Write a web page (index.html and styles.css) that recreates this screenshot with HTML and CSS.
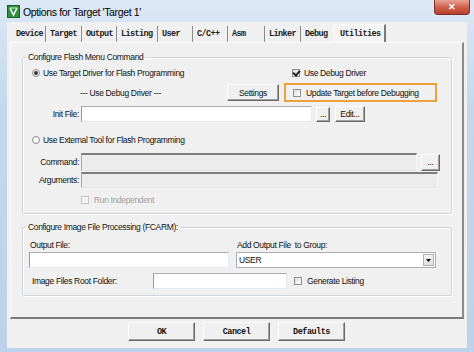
FILE: index.html
```html
<!DOCTYPE html>
<html lang="en">
<head>
  <meta charset="UTF-8" />
  <title>Options for Target 'Target 1'</title>
  <link rel="stylesheet" href="styles.css">
</head>
<body>

<div class="window">
  <div class="titlebar">
    <svg class="app-icon" width="13" height="13" viewBox="0 0 13 13">
      <rect x="0.5" y="0.5" width="12" height="12" fill="#2f8f3a" stroke="#1d5e25" />
      <path d="M3 3 L6.5 10 L10 3" stroke="#fff" stroke-width="1.6" fill="none" />
      <path d="M3 3 H10" stroke="#bfe8c0" stroke-width="1.2" />
    </svg>
    <span class="title">Options for Target 'Target 1'</span>
    <div class="close">&#x2715;</div>
  </div>

  <div class="client">
    <ul class="tabs">
      <li>Device</li>
      <li>Target</li>
      <li>Output</li>
      <li>Listing</li>
      <li>User</li>
      <li>C/C++</li>
      <li>Asm</li>
      <li>Linker</li>
      <li>Debug</li>
      <li class="active">Utilities</li>
    </ul>

    <div class="page">
      <fieldset class="group flash">
        <legend>Configure Flash Menu Command</legend>

        <div class="row driver-row">
          <div class="col-a">
            <span class="radio on"></span>
            <span>Use Target Driver for Flash Programming</span>
          </div>
          <div class="col-b pad-b">
            <span class="check on"></span>
            <span>Use Debug Driver</span>
          </div>
        </div>

        <div class="row settings-row">
          <div class="col-a">
            <span class="debug-note">--- Use Debug Driver ---</span>
            <button class="btn settings">Settings</button>
          </div>
          <div class="col-b highlight">
            <span class="check"></span>
            <span>Update Target before Debugging</span>
          </div>
        </div>

        <div class="row field init-row">
          <span class="field-label">Init File:</span>
          <span class="text init-input"></span>
          <button class="btn dots">...</button>
          <button class="btn edit">Edit...</button>
        </div>

        <div class="row option-row">
          <span class="radio"></span>
          <span>Use External Tool for Flash Programming</span>
        </div>

        <div class="row field command-row">
          <span class="field-label">Command:</span>
          <span class="text sunken command-input"></span>
          <button class="btn dots wide">...</button>
        </div>

        <div class="row field args-row">
          <span class="field-label">Arguments:</span>
          <span class="text sunken args-input"></span>
        </div>

        <div class="row run-row disabled">
          <span class="check faded"></span>
          <span>Run Independent</span>
        </div>
      </fieldset>

      <fieldset class="group image">
        <legend>Configure Image File Processing (FCARM):</legend>

        <div class="image-grid">
          <span class="grid-label">Output File:</span>
          <span class="grid-label">Add Output File&nbsp; to Group:</span>
          <span class="text"></span>
          <div class="combo">
            <span class="combo-value">USER</span>
            <span class="combo-arrow">
              <svg width="5" height="3" viewBox="0 0 5 3"><path d="M0 0 H5 L2.5 3 Z" fill="#000" /></svg>
            </span>
          </div>
        </div>

        <div class="row root-row">
          <span class="root-label">Image Files Root Folder:</span>
          <span class="text root-input"></span>
          <span class="check"></span>
          <span>Generate Listing</span>
        </div>
      </fieldset>
    </div>

    <div class="actions">
      <button class="btn big">OK</button>
      <button class="btn big">Cancel</button>
      <button class="btn big">Defaults</button>
    </div>
  </div>
</div>

</body>
</html>
```

FILE: styles.css
```css
:root {
  --frame: #c5d9ee;
  --face: #f0f0f0;
  --group-line: #d0d5da;
}

body {
  margin: 0;
  padding: 0;
  background: var(--frame);
}

.window {
  width: 474px;
  height: 352px;
  overflow: hidden;
  background: linear-gradient(#dce8f5, #c4d8ed 30%, #bcd2ea);
  font-family: "Liberation Sans", sans-serif;
  font-size: 8.5px;
  letter-spacing: -0.35px;
  color: #111;
}

/* title bar */

.titlebar {
  height: 22px;
  display: flex;
  align-items: center;
  padding-left: 7px;
}

.app-icon {
  margin-top: 1px;
}

.title {
  margin-left: 3px;
  margin-top: 1px;
  font-size: 10.5px;
  letter-spacing: -0.35px;
  color: #000;
}

.close {
  margin-left: auto;
  margin-right: 4px;
  align-self: flex-start;
  width: 36px;
  height: 15px;
  border: 1px solid #7b2f2a;
  border-top: none;
  border-radius: 0 0 4px 4px;
  background: linear-gradient(#e8a493, #d0624e 50%, #b8402e);
  color: #fff;
  font-size: 9px;
  font-weight: bold;
  letter-spacing: 0;
  text-align: center;
  line-height: 14px;
  box-sizing: border-box;
}

/* client area */

.client {
  margin: 0 7px;
  height: 326px;
  background: var(--face);
  display: flex;
  flex-direction: column;
}

.tabs {
  list-style: none;
  margin: 0;
  padding: 4px 0 0 5px;
  display: flex;
  height: 16px;
  font-family: "Liberation Mono", monospace;
  font-size: 8.5px;
  font-weight: bold;
  letter-spacing: -0.6px;
}

.tabs li {
  box-sizing: border-box;
  height: 16px;
  line-height: 16px;
  padding-left: 4px;
  border-right: 1px solid #8a8a8a;
  color: #222;
}

.tabs li:nth-child(1) { width: 34px; }
.tabs li:nth-child(2) { width: 36px; }
.tabs li:nth-child(3) { width: 35px; }
.tabs li:nth-child(4) { width: 41px; }
.tabs li:nth-child(5) { width: 35px; }
.tabs li:nth-child(6) { width: 35px; }
.tabs li:nth-child(7) { width: 37px; }
.tabs li:nth-child(8) { width: 36px; }
.tabs li:nth-child(9) { width: 32px; border-right: none; }

.tabs li.active {
  width: 53px;
  height: 18px;
  margin-top: -2px;
  line-height: 18px;
  padding-left: 6px;
  background: #f4f4f4;
  border-left: 1px solid #fff;
  border-top: 1px solid #fff;
  border-right: 2px solid #7a7a7a;
}

.page {
  margin: 0 3px;
  height: 277px;
  border-top: 1px solid #fff;
  border-left: 1px solid #fff;
  border-right: 2px solid #8a8a8a;
  border-bottom: 2px solid #7a7a7a;
  padding: 9px 10px 0 11px;
  box-sizing: border-box;
}

/* group boxes */

.group {
  margin: 0;
  padding: 0;
  border: 1px solid var(--group-line);
  border-radius: 2px;
  box-shadow: inset 1px 1px #fff, 1px 1px #fff;
  min-width: 0;
}

.group legend {
  margin-left: 3px;
  padding: 0 2px;
  line-height: 11px;
}

.flash {
  height: 162px;
  box-sizing: border-box;
}

.image {
  margin-top: 8px;
  height: 74px;
  box-sizing: border-box;
}

.row {
  display: flex;
  align-items: center;
}

.driver-row {
  height: 12px;
  margin-top: 4px;
}

.col-a {
  width: 261px;
  display: flex;
  align-items: center;
}

.col-b {
  display: flex;
  align-items: center;
  gap: 4px;
}

.driver-row .col-a {
  padding-left: 9px;
  box-sizing: border-box;
  gap: 3px;
}

.pad-b {
  padding-left: 8px;
}

.settings-row {
  margin-top: 4px;
  height: 19px;
}

.debug-note {
  margin-left: 57px;
}

.settings {
  margin-left: auto;
  margin-right: 5px;
  width: 52px;
  height: 17px;
}

.highlight {
  width: 153px;
  height: 19px;
  box-sizing: border-box;
  border: 2px solid #eda13c;
  padding-left: 7px;
  gap: 5px;
}

.field {
  gap: 2px;
}

.field-label {
  width: 56px;
  text-align: right;
}

.init-row {
  margin-top: 4px;
  height: 16px;
}

.text {
  display: block;
  height: 16px;
  box-sizing: border-box;
  background: #fff;
  border: 1px solid #e3e9ef;
  border-top-color: #abadb3;
  border-left-color: #9a9a9a;
}

.init-input {
  width: 231px;
}

.dots {
  margin-left: 2px;
  width: 14px;
  height: 15px;
  padding: 0;
  font-size: 8px;
}

.dots.wide {
  width: 19px;
  height: 17px;
}

.edit {
  margin-left: 3px;
  width: 30px;
  height: 16px;
}

.option-row {
  margin-top: 12px;
  height: 12px;
  padding-left: 9px;
  gap: 3px;
}

.command-row {
  margin-top: 7px;
  height: 18px;
}

.sunken {
  background: #ececec;
  border-top: 2px solid #7d7d7d;
  border-left: 1px solid #a8a8a8;
  border-right: 1px solid #f6f6f6;
  border-bottom: 1px solid #e6e6e6;
}

.command-input {
  width: 336px;
  height: 18px;
}

.args-row {
  margin-top: 1px;
  height: 16px;
}

.args-input {
  width: 357px;
}

.run-row {
  margin-top: 6px;
  height: 12px;
  padding-left: 58px;
  gap: 5px;
}

.disabled {
  color: #a0a0a0;
}

/* image file processing */

.image-grid {
  display: grid;
  grid-template-columns: 200px 200px;
  grid-template-rows: 14px 16px;
  column-gap: 7px;
  padding-left: 6px;
  margin-top: 5px;
}

.grid-label {
  padding-left: 1px;
  line-height: 14px;
}

.combo {
  display: flex;
  height: 16px;
  box-sizing: border-box;
  background: #fff;
  border: 1px solid #abadb3;
}

.combo-value {
  flex: 1;
  padding-left: 2px;
  line-height: 14px;
}

.combo-arrow {
  width: 9px;
  margin: 1px;
  display: flex;
  align-items: center;
  justify-content: center;
  background: linear-gradient(#f5f5f5, #dedede);
  border: 1px solid #b0b0b0;
}

.root-row {
  margin-top: 5px;
  height: 16px;
  padding-left: 9px;
}

.root-label {
  width: 121px;
}

.root-input {
  width: 134px;
  margin-right: 7px;
}

.root-row .check {
  margin-right: 5px;
}

/* checkbox & radio */

.check {
  width: 8px;
  height: 8px;
  box-sizing: border-box;
  border: 1px solid #8e8f8f;
  background: linear-gradient(135deg, #dcdcdc, #fff);
  position: relative;
  flex: none;
}

.check.on::after {
  content: "";
  position: absolute;
  left: 1px;
  top: -1px;
  width: 3px;
  height: 5px;
  border: solid #222;
  border-width: 0 2px 2px 0;
  transform: rotate(40deg);
}

.check.faded {
  border-color: #c4c4c4;
  background: #f4f4f4;
}

.radio {
  width: 8px;
  height: 8px;
  box-sizing: border-box;
  border: 1px solid #8e8f8f;
  border-radius: 50%;
  background: #f6f6f6;
  position: relative;
  flex: none;
}

.radio.on::after {
  content: "";
  position: absolute;
  left: 1px;
  top: 1px;
  width: 4px;
  height: 4px;
  border-radius: 50%;
  background: #333;
}

/* buttons */

.btn {
  font-family: inherit;
  font-size: 8.5px;
  letter-spacing: -0.35px;
  color: #111;
  background: #f0f0f0;
  box-sizing: border-box;
  padding: 0;
  border: 1px solid;
  border-color: #fff #696969 #696969 #fff;
  box-shadow: inset -1px -1px #a0a0a0;
}

.actions {
  display: flex;
  gap: 8px;
  padding: 3px 0 0 121px;
}

.big {
  width: 67px;
  height: 19px;
  font-family: "Liberation Mono", monospace;
  font-size: 8.5px;
  font-weight: bold;
  letter-spacing: -0.5px;
  border-color: #fff #6a6a6a #6a6a6a #fff;
}
```
